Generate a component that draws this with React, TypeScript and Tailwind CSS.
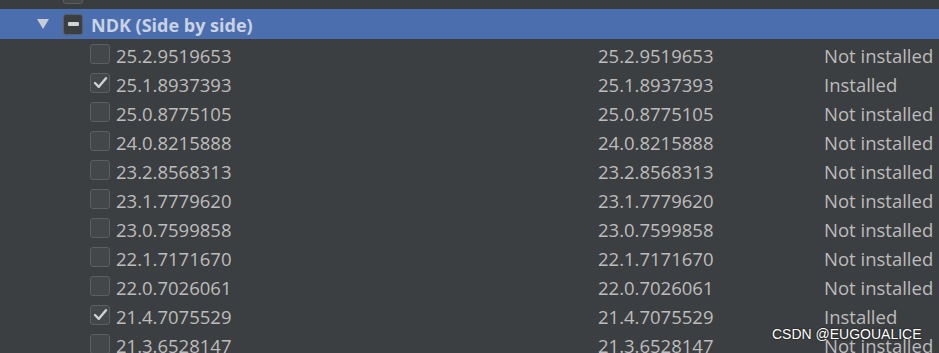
import { Fragment } from "react";

const rows = [
  { v: "25.2.9519653", on: false },
  { v: "25.1.8937393", on: true },
  { v: "25.0.8775105", on: false },
  { v: "24.0.8215888", on: false },
  { v: "23.2.8568313", on: false },
  { v: "23.1.7779620", on: false },
  { v: "23.0.7599858", on: false },
  { v: "22.1.7171670", on: false },
  { v: "22.0.7026061", on: false },
  { v: "21.4.7075529", on: true },
  { v: "21.3.6528147", on: false },
];

function Box({ checked }: { checked: boolean }) {
  return (
    <div className="flex h-[20px] w-[20px] shrink-0 items-center justify-center rounded-[3px] border border-[#5c5f61] bg-[#43474a]">
      {checked && (
        <svg width="15" height="13" viewBox="0 0 15 13">
          <path d="M2 7 L5.8 10.8 L13 2.2" fill="none" stroke="#cfd0d1" strokeWidth="2.4" strokeLinecap="round" strokeLinejoin="round" />
        </svg>
      )}
    </div>
  );
}

export default function App() {
  return (
    <div className="relative h-[353px] w-[939px] overflow-hidden bg-[#3c3f41] text-[18.5px] text-[#bcbcbc]" style={{ fontFamily: '"Open Sans", "Noto Sans", sans-serif' }}>
      <div className="h-[9px] overflow-hidden bg-[#3a3d3f] pl-[63px]">
        <div className="mt-[-16px] h-[20px] w-[20px] rounded-[3px] border border-[#5c5f61] bg-[#43474a]"></div>
      </div>
      <div className="flex h-[30px] items-center bg-[#4b6eaf]">
        <svg className="ml-[37px]" width="12" height="10" viewBox="0 0 12 10">
          <path d="M0 0 L12 0 L6 10 Z" fill="#c8ccd4" />
        </svg>
        <div className="ml-[14px] flex h-[21px] w-[20px] items-center justify-center rounded-[3px] border border-[#5c5f61] bg-[#3c3f41]">
          <div className="h-[4px] w-[11px] rounded-[1px] bg-[#d4d4d4]"></div>
        </div>
        <span className="ml-[8px] mt-[2px] text-[18px] font-bold text-[#c9d2e2]">NDK (Side by side)</span>
      </div>
      {rows.map((r) => (
        <Fragment key={r.v}>
          <div className="flex h-[29px] items-center">
            <div className="ml-[90px]">
              <Box checked={r.on} />
            </div>
            <span className="ml-[6px] mt-[4px] w-[482px]">{r.v}</span>
            <span className="mt-[4px] w-[226px]">{r.v}</span>
            <span className="mt-[4px]">{r.on ? "Installed" : "Not installed"}</span>
          </div>
        </Fragment>
      ))}
      <div
        className="absolute left-[772px] top-[324px] text-[14px] text-white"
        style={{ fontFamily: '"Liberation Sans", Arial, sans-serif', textShadow: "0 0 2px #000" }}
      >
        CSDN @EUGOUALICE
      </div>
    </div>
  );
}
